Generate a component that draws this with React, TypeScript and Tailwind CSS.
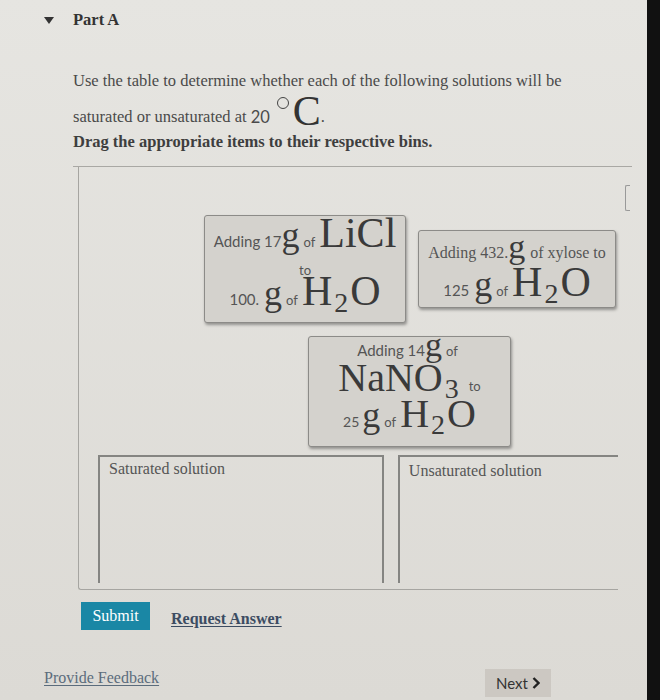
import type { ReactNode } from 'react';

const SERIF = { fontFamily: '"Liberation Serif", "DejaVu Serif", serif' };
const SANS = { fontFamily: 'Lato, "Open Sans", sans-serif' };

function Sm({ children }: { children: ReactNode }) {
  return (
    <span className="text-[15px] leading-none text-[#555]" style={SANS}>
      {children}
    </span>
  );
}

function Of() {
  return (
    <span className="mx-[4px] text-[13px] leading-none text-[#555]" style={SANS}>
      of
    </span>
  );
}

function Big({ children, size = 'text-[40px]' }: { children: ReactNode; size?: string }) {
  return (
    <span className={`${size} leading-none text-[#3a3a3a]`} style={SERIF}>
      {children}
    </span>
  );
}

function Sub({ children }: { children: ReactNode }) {
  return <span className="relative top-[7px] mx-[2px] text-[28px] leading-none">{children}</span>;
}

function Water({ size = 'text-[42px]' }: { size?: string }) {
  return (
    <Big size={size}>
      H<Sub>2</Sub>O
    </Big>
  );
}

function Line({ className, children }: { className: string; children: ReactNode }) {
  return <div className={`flex items-baseline leading-none ${className}`}>{children}</div>;
}

function Card({ className, children }: { className: string; children: ReactNode }) {
  return (
    <div
      className={`flex flex-col items-center rounded-[3px] border border-[#8c8b88] bg-[#d4d2cd] shadow-[1px_2px_3px_rgba(0,0,0,0.35)] ${className}`}
    >
      {children}
    </div>
  );
}

export default function App() {
  return (
    <div className="flex h-[700px] w-[660px] overflow-hidden">
      <div className="relative flex-1 bg-gradient-to-b from-[#e6e5e1] to-[#dcdad5] text-[#4a4a4a]" style={SERIF}>
        {/* header */}
        <div className="flex items-center pt-[11px]">
          <svg className="ml-[44px]" width="10" height="7" viewBox="0 0 10 7">
            <path d="M0 0 L10 0 L5 7 Z" fill="#333" />
          </svg>
          <span className="ml-[19px] text-[16.5px] font-bold leading-[18px] text-[#333]">Part A</span>
        </div>

        {/* prompt */}
        <div className="ml-[73px] mt-[42px] text-[16.5px] leading-[20px]">
          Use the table to determine whether each of the following solutions will be
        </div>
        <div className="ml-[73px] mt-[2px] flex h-[34px] items-end text-[16.5px]">
          <span className="leading-[20px]">saturated or unsaturated at </span>
          <span className="ml-[4px] leading-[20px]" style={SANS}>
            20
          </span>
          <span className="mb-[18px] ml-[7px] h-[12px] w-[12px] rounded-full border-[1.5px] border-[#444]" />
          <span className="ml-[4px] text-[42px] leading-[31px] text-[#333]">C</span>
          <span className="leading-[20px]">.</span>
        </div>
        <div className="ml-[73px] mt-[5px] text-[16.5px] font-bold leading-[20px] text-[#3e3e3e]">
          Drag the appropriate items to their respective bins.
        </div>

        {/* drag area */}
        <div className="relative ml-[73px] mt-[14px] w-[559px] border-t border-[#a9a8a4]">
          <div className="absolute right-[2px] top-[18px] h-[26px] w-[5px] rounded-l-[2px] border-y border-l border-[#999]" />
          <div className="ml-[5px] w-[540px] rounded-bl-[3px] border-b border-l border-[#a6a5a1] pb-[6px]">
            <div className="flex items-center pl-[125px] pt-[48px]">
              <Card className="h-[108px] w-[202px]">
                <Line className="-mt-[4px] h-[38px]">
                  <Sm>Adding 17</Sm>
                  <Big size="text-[36px]">g</Big>
                  <Of />
                  <Big size="text-[42px]">LiCl</Big>
                </Line>
                <div className="mt-[13px] h-[15px] text-[13px] leading-[15px] text-[#555]" style={SANS}>
                  to
                </div>
                <Line className="-mt-[8px] h-[42px]">
                  <Sm>100.</Sm>
                  <span className="ml-[5px]" />
                  <Big size="text-[36px]">g</Big>
                  <Of />
                  <Water />
                </Line>
              </Card>
              <Card className="ml-[12px] h-[78px] w-[198px] justify-center pb-[8px]">
                <Line className="h-[31px]">
                  <span className="text-[16px] leading-none text-[#555]" style={SERIF}>
                    Adding 432.
                  </span>
                  <Big size="text-[34px]">g</Big>
                  <span className="ml-[5px] text-[16px] leading-none text-[#555]" style={SERIF}>
                    of xylose to
                  </span>
                </Line>
                <Line className="h-[40px]">
                  <Sm>125</Sm>
                  <span className="ml-[5px]" />
                  <Big size="text-[36px]">g</Big>
                  <Of />
                  <Water />
                </Line>
              </Card>
            </div>

            <div className="ml-[229px] mt-[13px]">
              <Card className="h-[111px] w-[203px]">
                <Line className="-mt-[9px] h-[30px]">
                  <Sm>Adding 14</Sm>
                  <Big size="text-[34px]">g</Big>
                  <Of />
                </Line>
                <Line className="h-[38px]">
                  <Big size="text-[40px]">
                    NaNO<Sub>3</Sub>
                  </Big>
                  <span className="ml-[8px] text-[13px] leading-none text-[#555]" style={SANS}>
                    to
                  </span>
                </Line>
                <Line className="-mt-[2px] h-[38px]">
                  <span className="text-[14px] leading-none text-[#555]" style={SANS}>
                    25
                  </span>
                  <span className="ml-[3px]" />
                  <Big size="text-[36px]">g</Big>
                  <Of />
                  <Water size="text-[40px]" />
                </Line>
              </Card>
            </div>

            <div className="mt-[8px] flex gap-[14px] pl-[19px]">
              <div className="h-[128px] w-[287px] border-x-2 border-t-2 border-[#858582] px-[9px]">
                <span className="text-[16px] leading-[18px] text-[#555]">Saturated solution</span>
              </div>
              <div className="h-[128px] w-[221px] border-l-2 border-t-2 border-[#858582] px-[9px] pt-[2px]">
                <span className="text-[16px] leading-[18px] text-[#555]">Unsaturated solution</span>
              </div>
            </div>
          </div>
        </div>

        {/* actions */}
        <div className="ml-[81px] mt-[11px] flex items-center">
          <button className="h-[28px] w-[69px] bg-[#1a87a5] text-[16px] text-white" style={SERIF}>
            Submit
          </button>
          <span className="ml-[21px] mt-[6px] text-[16px] font-bold text-[#3c4c62] underline underline-offset-2">
            Request Answer
          </span>
        </div>

        <div className="mt-[38px] flex w-[551px] items-center justify-between pl-[44px]">
          <span className="-mt-[10px] text-[16px] text-[#5b6c7c] underline underline-offset-2">Provide Feedback</span>
          <div className="flex h-[28px] w-[66px] items-center justify-center gap-[4px] bg-[#ccc8c2] text-[15px] text-[#333]" style={SANS}>
            Next
            <svg width="8" height="12" viewBox="0 0 8 12">
              <path d="M1.5 1 L6.5 6 L1.5 11" fill="none" stroke="#222" strokeWidth="2.4" />
            </svg>
          </div>
        </div>
      </div>
      <div className="w-[13px] bg-[#111]" />
    </div>
  );
}
